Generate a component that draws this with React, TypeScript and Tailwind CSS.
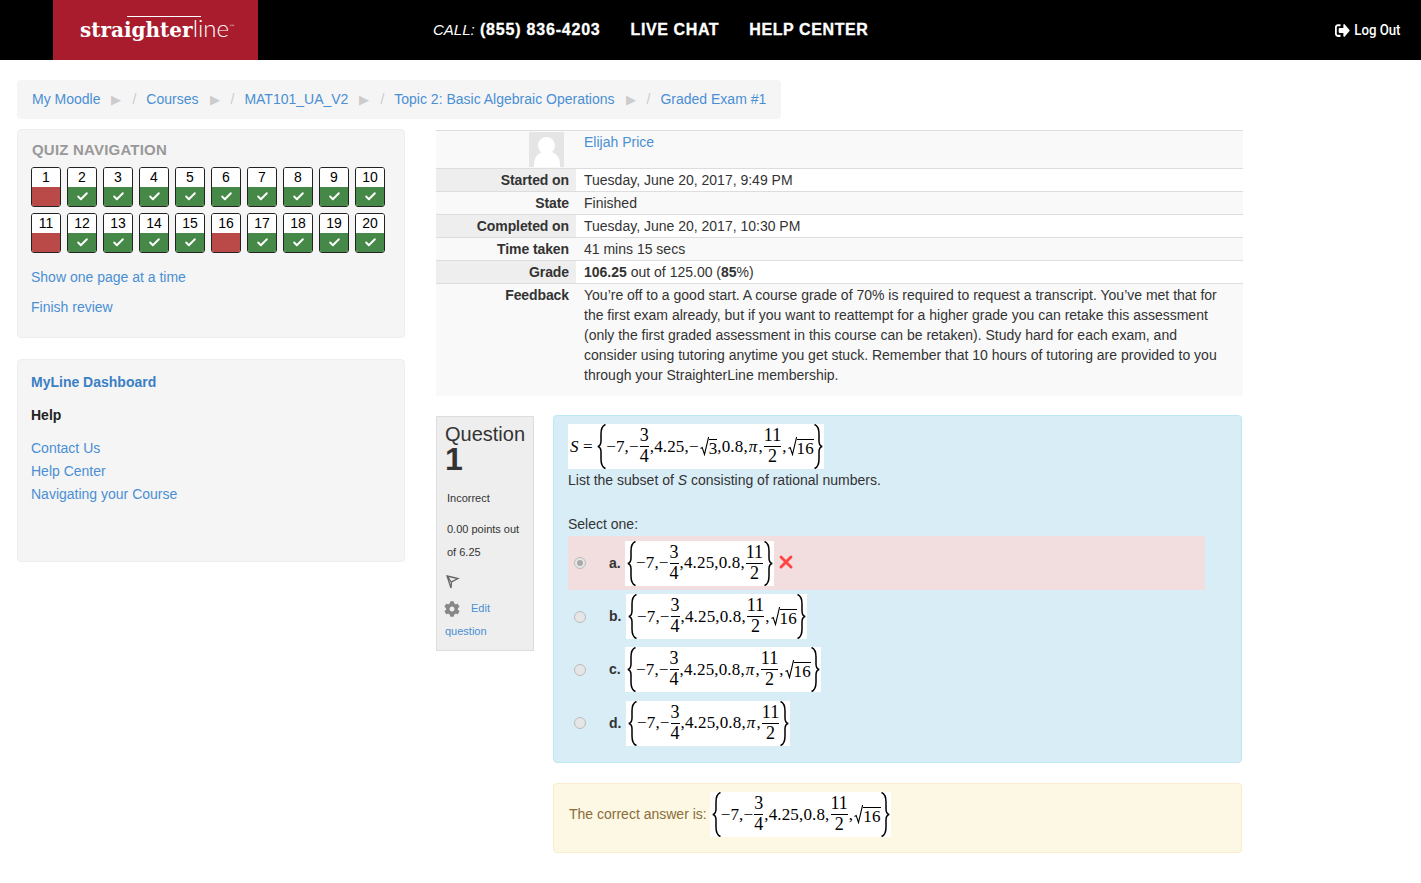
import React from "react";
import { Check, X } from "lucide-react";
import { FaCog, FaSignOutAlt } from "react-icons/fa";

const mathFont = { fontFamily: '"Liberation Serif", serif' };

const Frac = ({ n, d }: { n: string; d: string }) => (
  <span className="inline-flex flex-col items-center text-[18px] leading-[18px] mx-[1px] tracking-normal">
    <span className="border-b border-black pt-[2px] pb-[2px]">{n}</span>
    <span className="pb-[4px]">{d}</span>
  </span>
);

const Sqrt = ({ v }: { v: string }) => (
  <span className="inline-flex items-end ml-px">
    <svg width="9" height="19" viewBox="0 0 9 19" className="mb-[1px]">
      <path d="M0.5 11.5 L2.2 10.5 L4.5 17.5 L8.5 0.5 L9 0.5" fill="none" stroke="#000" strokeWidth="1.1" />
    </svg>
    <span className="border-t border-black leading-[17px]">{v}</span>
  </span>
);

const Brace = ({ right }: { right?: boolean }) => (
  <svg width="9" height="45" viewBox="0 0 9 45" className={`shrink-0 ${right ? "-scale-x-100" : ""}`}>
    <path
      d="M8.5 0.5 C4.5 2 4 6 4 10 L4 17 C4 20 3 22 0.8 22.5 C3 23 4 25 4 28 L4 35 C4 39 4.5 43 8.5 44.5"
      fill="none"
      stroke="#000"
      strokeWidth="1.5"
    />
  </svg>
);

type Part = string | { n: string; d: string } | { r: string } | { i: string };

const MathBox = ({ parts, className }: { parts: Part[]; className?: string }) => (
  <span
    style={mathFont}
    className={`inline-flex items-center shrink-0 h-[45px] bg-white text-black text-[17px] tracking-[0.15px] whitespace-pre pl-[2px] pr-[1px] ${className ?? ""}`}
  >
    {parts.map((p, i) => {
      if (typeof p === "string") {
        if (p === "{") return <Brace key={i} />;
        if (p === "}") return <Brace key={i} right />;
        return <span key={i}>{p}</span>;
      }
      if ("i" in p) return <i key={i} className={p.i === "π" ? "mx-px" : ""}>{p.i}</i>;
      if ("r" in p) return <Sqrt key={i} v={p.r} />;
      return <Frac key={i} n={p.n} d={p.d} />;
    })}
  </span>
);

const q34 = { n: "3", d: "4" };
const q112 = { n: "11", d: "2" };
const r16 = { r: "16" };
const pi = { i: "π" };

const options: { key: string; parts: Part[]; label: string; h: string }[] = [
  { key: "a.", parts: ["{", "−7,−", q34, ",4.25,0.8,", q112, "}"], label: "w-[16px]", h: "h-[54px] bg-[#f2dede]" },
  { key: "b.", parts: ["{", "−7,−", q34, ",4.25,0.8,", q112, ",", r16, "}"], label: "w-[17px]", h: "h-[53px]" },
  { key: "c.", parts: ["{", "−7,−", q34, ",4.25,0.8,", pi, ",", q112, ",", r16, "}"], label: "w-[16px]", h: "h-[53px]" },
  { key: "d.", parts: ["{", "−7,−", q34, ",4.25,0.8,", pi, ",", q112, "}"], label: "w-[17px]", h: "h-[54px]" },
];

const summary: { label: string; value: React.ReactNode; shade: boolean }[] = [
  { label: "Started on", value: "Tuesday, June 20, 2017, 9:49 PM", shade: true },
  { label: "State", value: "Finished", shade: false },
  { label: "Completed on", value: "Tuesday, June 20, 2017, 10:30 PM", shade: true },
  { label: "Time taken", value: "41 mins 15 secs", shade: false },
  {
    label: "Grade",
    value: (
      <>
        <b>106.25</b> out of 125.00 (<b>85</b>%)
      </>
    ),
    shade: true,
  },
];

const crumbs = ["My Moodle", "Courses", "MAT101_UA_V2", "Topic 2: Basic Algebraic Operations"];

const QuizButton = ({ n, wrong }: { n: number; wrong?: boolean }) => (
  <div className="w-[30px] h-[40px] rounded-[3px] border border-[#222] overflow-hidden flex flex-col text-[14px] text-black">
    <div className="h-[19px] leading-[19px] text-center bg-white">{n}</div>
    <div className={`flex-1 flex items-center justify-center ${wrong ? "bg-[#b94a48]" : "bg-[#468847]"}`}>
      {!wrong && <Check size={13} strokeWidth={3.5} className="text-white" />}
    </div>
  </div>
);

export default function App() {
  const wrong = [1, 11, 16];
  return (
    <div
      className="min-h-[883px] bg-white text-[14px] text-[#333]"
      style={{ fontFamily: '"Liberation Sans", Arial, sans-serif' }}
    >
      <header className="h-[60px] bg-black flex items-center pl-[53px] pr-[20px] text-white">
        <div className="w-[205px] h-full bg-[#a81c2e] flex items-center pl-[27px] pb-[3px]">
          <span className="relative text-[20px] leading-[24px] whitespace-nowrap" style={{ fontFamily: '"DejaVu Serif", serif' }}>
            <b className="font-bold">straighter</b>
            <span className="font-light text-[24px]" style={{ fontFamily: "Lato, sans-serif" }}>line</span>
            <span className="text-[6px] align-[8px]">™</span>
            <span className="absolute left-[47px] w-[74px] top-[1px] h-px bg-white" />
          </span>
        </div>
        <nav className="ml-[175px] flex items-center gap-[30px] text-[16px] font-bold tracking-[0.6px] [-webkit-text-stroke:0.3px]">
          <span className="tracking-[0.8px]">
            <i className="font-light text-[15px] tracking-normal [-webkit-text-stroke:0px]">CALL:</i> (855) 836-4203
          </span>
          <span>LIVE CHAT</span>
          <span>HELP CENTER</span>
        </nav>
        <div className="ml-auto flex items-center gap-[5px] text-[15px] font-bold origin-right scale-x-[0.88]" style={{ fontFamily: "Roboto, sans-serif" }}>
          <FaSignOutAlt size={17} />
          <span className="font-medium">Log Out</span>
        </div>
      </header>

      <main className="px-[17px] pt-[20px]">
        <div className="inline-flex items-center h-[39px] px-[15px] bg-[#f5f5f5] rounded-[4px] text-[#4a8fd4]">
          {crumbs.map((c) => (
            <React.Fragment key={c}>
              <span>{c}</span>
              <span className="w-[10px] ml-[11px] flex justify-center text-[#ccc] text-[13px]">▶</span>
              <span className="text-[#ccc] ml-[11px] mr-[10px]">/</span>
            </React.Fragment>
          ))}
          <span>Graded Exam #1</span>
        </div>

        <div className="flex mt-[10px]">
          <aside className="w-[388px] shrink-0">
            <section className="h-[209px] bg-[#f5f5f5] border border-[#eee] rounded-[4px] px-[13px] pt-[10px]">
              <h2 className="text-[15px] tracking-[0.2px] leading-[20px] font-bold text-[#999] ml-px">QUIZ NAVIGATION</h2>
              <div className="grid grid-cols-[repeat(10,30px)] gap-x-[6px] gap-y-[6px] mt-[7px]">
                {Array.from({ length: 20 }, (_, i) => (
                  <QuizButton key={i} n={i + 1} wrong={wrong.includes(i + 1)} />
                ))}
              </div>
              <div className="mt-[14px] flex flex-col gap-[10px] text-[#4a8fd4] leading-[20px]">
                <span>Show one page at a time</span>
                <span>Finish review</span>
              </div>
            </section>

            <section className="h-[203px] mt-[21px] bg-[#f5f5f5] border border-[#eee] rounded-[4px] px-[13px] pt-[12px] leading-[20px]">
              <h3 className="font-bold text-[#3a7fc4]">MyLine Dashboard</h3>
              <h3 className="font-bold mt-[13px] text-[#222]">Help</h3>
              <ul className="mt-[13px] flex flex-col gap-[3px] text-[#4a8fd4]">
                <li>Contact Us</li>
                <li>Help Center</li>
                <li>Navigating your Course</li>
              </ul>
            </section>
          </aside>

          <div className="ml-[31px] w-[807px] shrink-0">
            <div className="bg-[#f9f9f9] mb-[19px]">
              <div className="flex h-[38px] border-t border-[#ddd] mt-px">
                <div className="w-[110px] flex justify-end">
                  <div className="w-[35px] h-[35px] bg-[#e5e5e5] mt-[1px] flex flex-col items-center overflow-hidden mr-[-18px]">
                    <div className="w-[17px] h-[17px] rounded-full bg-white mt-[5px] shrink-0" />
                    <div className="w-[26px] h-[18px] rounded-t-full bg-white -mt-[3px] shrink-0" />
                  </div>
                </div>
                <div className="ml-[38px] leading-[23px] text-[#4a8fd4]">Elijah Price</div>
              </div>
              {summary.map((r) => (
                <div key={r.label} className="flex h-[23px] border-t border-[#ddd] leading-[22px]">
                  <div className={`w-[140px] pr-[7px] text-right font-bold tracking-[-0.1px] ${r.shade ? "bg-[#eee]" : ""}`}>{r.label}</div>
                  <div className={`flex-1 pl-[8px] ${r.shade ? "bg-white" : ""}`}>{r.value}</div>
                </div>
              ))}
              <div className="flex h-[113px] border-t border-[#ddd]">
                <div className="w-[140px] pr-[7px] text-right font-bold tracking-[-0.1px] leading-[22px]">Feedback</div>
                <div className="flex-1 pl-[8px] pr-[20px] leading-[20px] pt-px">
                  You’re off to a good start. A course grade of 70% is required to request a transcript. You’ve met that for the first exam already, but if you want to reattempt for a higher grade you can retake this assessment (only the first graded assessment in this course can be retaken). Study hard for each exam, and consider using tutoring anytime you get stuck. Remember that 10 hours of tutoring are provided to you through your StraighterLine membership.
                </div>
              </div>
            </div>

            <div className="flex items-start">
              <div className="w-[98px] h-[235px] mt-px shrink-0 bg-[#eee] border border-[#ddd] px-[8px] pt-[6px] text-[11px]">
                <div className="text-[20px] leading-[22px]">Question</div>
                <div className="text-[32px] leading-[29px] font-bold">1</div>
                <div className="ml-[2px] mt-[14px] leading-[20px]">Incorrect</div>
                <div className="ml-[2px] mt-[10px] leading-[23px]">0.00 points out of 6.25</div>
                <svg width="14" height="14" viewBox="0 0 14 14" className="mt-[11px] ml-px">
                  <path d="M1 1 L12 3.5 L5.5 7 L5 13 Z M5 7 L2 2" fill="none" stroke="#666" strokeWidth="1.3" />
                </svg>
                <div className="mt-[8px] text-[#4a8fd4] leading-[23px]">
                  <FaCog size={16} className="inline -ml-px text-[#888] mr-[11px]" />
                  Edit question
                </div>
              </div>

              <div className="ml-[19px] flex-1 mr-px">
                <div className="h-[348px] bg-[#d9edf7] border border-[#bce8f1] rounded-[4px] pl-[14px] pt-[8px]">
                  <MathBox parts={[{ i: "S" }, " = ", "{", "−7,−", q34, ",4.25,−", { r: "3" }, ",0.8,", pi, ",", q112, ",", r16, "}"]} />
                  <div className="leading-[20px] mt-[1px]">
                    List the subset of <i>S</i> consisting of rational numbers.
                  </div>
                  <div className="leading-[20px] mt-[24px]">Select one:</div>
                  <div className="mt-[2px] w-[637px] flex flex-col">
                    {options.map((o, i) => (
                      <div key={o.key} className={`flex items-center ${o.h}`}>
                        <span className="w-[12px] h-[12px] ml-[6px] rounded-full border border-[#bbb] bg-[#e6e6e6] flex items-center justify-center shrink-0">
                          {i === 0 && <span className="w-[6px] h-[6px] rounded-full bg-[#aaa]" />}
                        </span>
                        <b className={`ml-[23px] ${o.label}`}>{o.key}</b>
                        <MathBox parts={o.parts} />
                        {i === 0 && <X size={20} strokeWidth={3.4} className="ml-[2px] -mt-[2px] text-[#f44]" />}
                      </div>
                    ))}
                  </div>
                </div>
                <div className="mt-[20px] h-[70px] bg-[#fcf8e3] border border-[#faebcc] rounded-[4px] pl-[15px] pb-[7px] flex items-center text-[#8a6d3b]">
                  <span className="mr-[3px]">The correct answer is:</span>
                  <MathBox parts={options[1].parts} />
                </div>
              </div>
            </div>
          </div>
        </div>
      </main>
    </div>
  );
}
